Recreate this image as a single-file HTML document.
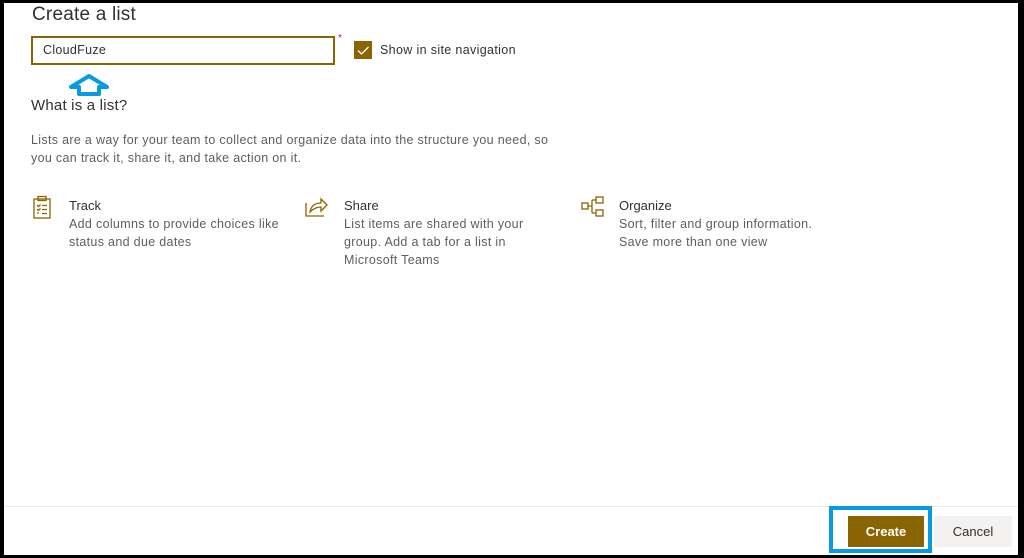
<!DOCTYPE html>
<html><head><style>
*{margin:0;padding:0;box-sizing:border-box}
body{width:1024px;height:558px;background:#000;font-family:"Liberation Sans",sans-serif;position:relative;overflow:hidden}
.pg{position:absolute;left:4px;top:3px;width:1014px;height:552px;background:#fff}
.a{position:absolute;color:#323130;white-space:nowrap}
.s{font-size:12.5px;color:#605e5c;line-height:18px;letter-spacing:0.32px}
</style></head><body>
<div class="pg"></div>
<div class="a" style="left:32px;top:4px;font-size:19px;letter-spacing:0.2px">Create a list</div>
<div style="position:absolute;left:31px;top:36px;width:304px;height:29px;border:2px solid #8a6400"></div>
<div class="a" style="left:43px;top:43px;font-size:12.5px;letter-spacing:0.3px">CloudFuze</div>
<div class="a" style="left:338px;top:33px;font-size:10px;color:#a4262c">*</div>
<div style="position:absolute;left:354px;top:41px;width:18px;height:18px;background:#8a6400"></div>
<svg style="position:absolute;left:354px;top:41px" width="18" height="18"><path d="M4 9.5l3.5 3.5 7-7" stroke="#fff" stroke-width="1.3" fill="none"/></svg>
<div class="a" style="left:380px;top:43px;font-size:12.5px;letter-spacing:0.35px">Show in site navigation</div>
<svg style="position:absolute;left:66px;top:73px" width="46" height="24"><path d="M23 3L5 14h8v7h20v-7h8z" fill="none" stroke="#0a9ae0" stroke-width="4" stroke-linejoin="round"/></svg>
<div class="a" style="left:31px;top:97px;font-size:15px;letter-spacing:0.2px">What is a list?</div>
<div class="a s" style="left:31px;top:131px">Lists are a way for your team to collect and organize data into the structure you need, so<br>you can track it, share it, and take action on it.</div>
<svg style="position:absolute;left:32px;top:195px" width="22" height="26" fill="none" stroke="#8a6400" stroke-width="1.3"><rect x="2" y="4" width="16" height="19"/><rect x="6" y="1.5" width="8" height="4"/><path d="M5 10l1.5 1.5 2-2M10 10.5h5M5 14l1.5 1.5 2-2M10 14.5h5M5 18h2M10 18.5h5"/></svg>
<div class="a" style="left:69px;top:198px;font-size:13px">Track</div>
<div class="a s" style="left:69px;top:215px">Add columns to provide choices like<br>status and due dates</div>
<svg style="position:absolute;left:304px;top:195px" width="26" height="24" fill="none" stroke="#8a6400" stroke-width="1.3"><path d="M2 8v13h18M6 17c1-6 5-9 11-9V4l6 6-6 6v-4c-5 0-8 2-11 5z"/></svg>
<div class="a" style="left:344px;top:198px;font-size:13px">Share</div>
<div class="a s" style="left:344px;top:215px">List items are shared with your<br>group. Add a tab for a list in<br>Microsoft Teams</div>
<svg style="position:absolute;left:580px;top:195px" width="26" height="24" fill="none" stroke="#8a6400" stroke-width="1.3"><rect x="2" y="8" width="6" height="6"/><rect x="16" y="2" width="7" height="6"/><rect x="16" y="15" width="7" height="6"/><path d="M8 11h4M12 5v13M12 5h4M12 18h4"/></svg>
<div class="a" style="left:619px;top:198px;font-size:13px">Organize</div>
<div class="a s" style="left:619px;top:215px">Sort, filter and group information.<br>Save more than one view</div>
<div style="position:absolute;left:4px;top:506px;width:1014px;height:1px;background:#edebe9"></div>
<div style="position:absolute;left:829px;top:506px;width:103px;height:47px;border:4px solid #0a9ae0"></div>
<div style="position:absolute;left:848px;top:516px;width:76px;height:31px;background:#8a6400;color:#fff;font-size:13px;font-weight:bold;text-align:center;line-height:31px">Create</div>
<div style="position:absolute;left:934px;top:516px;width:78px;height:31px;background:#f3f2f1;color:#323130;font-size:13px;text-align:center;line-height:31px">Cancel</div>
</body></html>
